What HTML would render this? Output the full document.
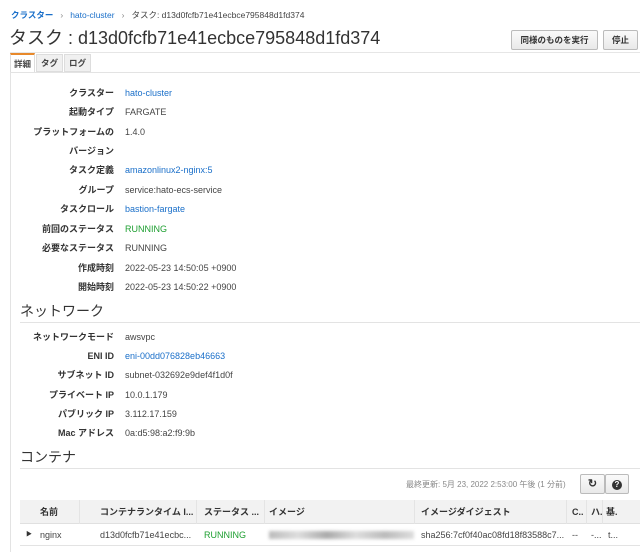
<!DOCTYPE html>
<html><head><meta charset="utf-8"><style>
*{box-sizing:border-box;margin:0;padding:0}
body{width:640px;height:549px;overflow:hidden;background:#fff;font-family:"Liberation Sans","Noto Sans CJK JP",sans-serif;font-size:9px;line-height:12px;color:#444;position:relative}
.a{position:absolute;white-space:nowrap}
.lnk{color:#1a6fc9}
.g{color:#1d9f30}
.lab{position:absolute;right:526px;font-weight:bold;color:#333;white-space:nowrap;height:12px;line-height:12px}
.val{position:absolute;left:125px;white-space:nowrap;height:12px;line-height:12px}
.btn{position:absolute;border:1px solid #bbb;border-radius:2px;background:linear-gradient(#fafafa,#e9e9e9);font-weight:bold;color:#333;text-align:center}
</style></head><body>
<div class="a" style="left:11px;top:9px;font-size:8.5px"><span class="lnk" style="font-weight:bold">クラスター</span><span style="color:#888;margin:0 7px">›</span><span class="lnk">hato-cluster</span><span style="color:#888;margin:0 7px">›</span><span>タスク: d13d0fcfb71e41ecbce795848d1fd374</span></div>
<div class="a" style="left:9px;top:26px;font-size:18px;line-height:24px;color:#333">タスク : d13d0fcfb71e41ecbce795848d1fd374</div>
<div class="btn" style="left:511px;top:30px;width:87px;height:20px;line-height:18px;font-size:8.5px">同様のものを実行</div>
<div class="btn" style="left:603px;top:30px;width:35px;height:20px;line-height:18px;font-size:8.5px">停止</div>
<div class="a" style="left:10px;top:52px;width:630px;border-top:1px solid #e6e6e6"></div>
<div class="a" style="left:10px;top:53px;width:25px;height:20px;border-top:2px solid #e8892b;background:#fff;border-right:1px solid #ddd;border-left:1px solid #ddd;font-weight:bold;text-align:center;line-height:18px;font-size:8.5px">詳細</div>
<div class="a" style="left:36px;top:54px;width:27px;height:18px;background:#f0f0f0;border:1px solid #ddd;text-align:center;line-height:16px;font-weight:bold;font-size:8.5px">タグ</div>
<div class="a" style="left:64px;top:54px;width:27px;height:18px;background:#f0f0f0;border:1px solid #ddd;text-align:center;line-height:16px;font-weight:bold;font-size:8.5px">ログ</div>
<div class="a" style="left:10px;top:72px;width:640px;height:480px;border-left:1px solid #e3e3e3;border-top:1px solid #e3e3e3"></div>

<div class="lab" style="top:87px">クラスター</div><div class="val lnk" style="top:87px">hato-cluster</div>
<div class="lab" style="top:106px">起動タイプ</div><div class="val" style="top:106px">FARGATE</div>
<div class="lab" style="top:126px">プラットフォームの</div><div class="val" style="top:126px">1.4.0</div>
<div class="lab" style="top:145px">バージョン</div>
<div class="lab" style="top:164px">タスク定義</div><div class="val lnk" style="top:164px">amazonlinux2-nginx:5</div>
<div class="lab" style="top:184px">グループ</div><div class="val" style="top:184px">service:hato-ecs-service</div>
<div class="lab" style="top:203px">タスクロール</div><div class="val lnk" style="top:203px">bastion-fargate</div>
<div class="lab" style="top:223px">前回のステータス</div><div class="val g" style="top:223px">RUNNING</div>
<div class="lab" style="top:242px">必要なステータス</div><div class="val" style="top:242px">RUNNING</div>
<div class="lab" style="top:262px">作成時刻</div><div class="val" style="top:262px">2022-05-23 14:50:05 +0900</div>
<div class="lab" style="top:281px">開始時刻</div><div class="val" style="top:281px">2022-05-23 14:50:22 +0900</div>

<div class="a" style="left:20px;top:302px;font-size:14px;line-height:18px;color:#333">ネットワーク</div>
<div class="a" style="left:20px;top:322px;width:620px;border-top:1px solid #e3e3e3"></div>
<div class="lab" style="top:331px">ネットワークモード</div><div class="val" style="top:331px">awsvpc</div>
<div class="lab" style="top:350px">ENI ID</div><div class="val lnk" style="top:350px">eni-00dd076828eb46663</div>
<div class="lab" style="top:369px">サブネット ID</div><div class="val" style="top:369px">subnet-032692e9def4f1d0f</div>
<div class="lab" style="top:389px">プライベート IP</div><div class="val" style="top:389px">10.0.1.179</div>
<div class="lab" style="top:408px">パブリック IP</div><div class="val" style="top:408px">3.112.17.159</div>
<div class="lab" style="top:427px">Mac アドレス</div><div class="val" style="top:427px">0a:d5:98:a2:f9:9b</div>

<div class="a" style="left:20px;top:448px;font-size:14px;line-height:18px;color:#333">コンテナ</div>
<div class="a" style="left:20px;top:468px;width:620px;border-top:1px solid #e3e3e3"></div>
<div class="a" style="left:406px;top:479px;font-size:8px;color:#888">最終更新: 5月 23, 2022 2:53:00 午後 (1 分前)</div>
<div class="btn" style="left:580px;top:474px;width:25px;height:20px;line-height:18px;font-size:11px">↻</div>
<div class="btn" style="left:605px;top:474px;width:24px;height:20px;line-height:18px;font-size:9px"><span style="display:inline-block;width:10px;height:10px;border-radius:50%;background:#333;color:#fff;line-height:10px;font-size:8px;margin-top:4px">?</span></div>
<div class="a" style="left:20px;top:500px;width:620px;height:24px;background:#f2f2f2;border-bottom:1px solid #e0e0e0"></div>
<div class="a" style="left:40px;top:506px;font-weight:bold;color:#333">名前</div>
<div class="a" style="left:79px;top:500px;height:24px;border-left:1px solid #e4e4e4"></div>
<div class="a" style="left:100px;top:506px;font-weight:bold;color:#333">コンテナランタイム I...</div>
<div class="a" style="left:196px;top:500px;height:24px;border-left:1px solid #e4e4e4"></div>
<div class="a" style="left:204px;top:506px;font-weight:bold;color:#333">ステータス ...</div>
<div class="a" style="left:264px;top:500px;height:24px;border-left:1px solid #e4e4e4"></div>
<div class="a" style="left:269px;top:506px;font-weight:bold;color:#333">イメージ</div>
<div class="a" style="left:414px;top:500px;height:24px;border-left:1px solid #e4e4e4"></div>
<div class="a" style="left:421px;top:506px;font-weight:bold;color:#333">イメージダイジェスト</div>
<div class="a" style="left:566px;top:500px;height:24px;border-left:1px solid #e4e4e4"></div>
<div class="a" style="left:572px;top:506px;font-weight:bold;color:#333">C..</div>
<div class="a" style="left:586px;top:500px;height:24px;border-left:1px solid #e4e4e4"></div>
<div class="a" style="left:591px;top:506px;font-weight:bold;color:#333">ハ.</div>
<div class="a" style="left:602px;top:500px;height:24px;border-left:1px solid #e4e4e4"></div>
<div class="a" style="left:606px;top:506px;font-weight:bold;color:#333">基.</div>
<div class="a" style="left:26px;top:529px;font-size:6px;color:#333">▶</div>
<div class="a" style="left:40px;top:529px">nginx</div>
<div class="a" style="left:100px;top:529px">d13d0fcfb71e41ecbc...</div>
<div class="a g" style="left:204px;top:529px">RUNNING</div>
<div class="a" style="left:269px;top:531px;width:145px;height:8px;background:linear-gradient(90deg,#bbb,#ddd 20%,#aaa 40%,#ddd 60%,#bbb 80%,#ddd);filter:blur(1.5px)"></div>
<div class="a" style="left:421px;top:529px">sha256:7cf0f40ac08fd18f83588c7...</div>
<div class="a" style="left:572px;top:529px">--</div>
<div class="a" style="left:591px;top:529px">-...</div>
<div class="a" style="left:608px;top:529px">t...</div>
<div class="a" style="left:20px;top:545px;width:620px;border-top:1px solid #e3e3e3"></div>
</body></html>
